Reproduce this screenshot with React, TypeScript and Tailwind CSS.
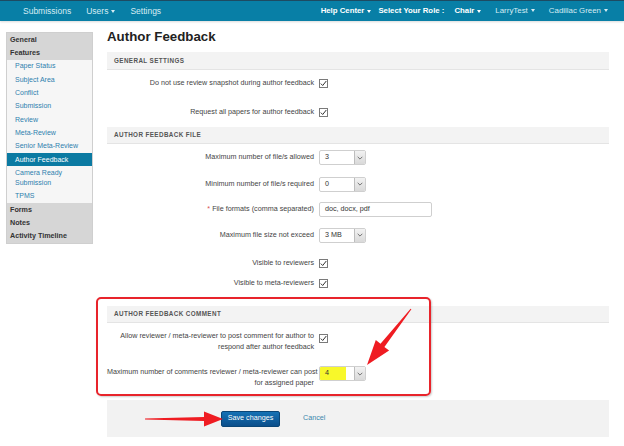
import type { ReactNode } from "react";

const Caret = ({ light }: { light?: boolean }) => (
  <span
    className={`ml-[3px] inline-block h-0 w-0 border-x-[2.5px] border-t-[3px] border-x-transparent align-middle ${
      light ? "border-t-[#d7ecf4]" : "border-t-white"
    }`}
  />
);

const Check = () => (
  <span className="flex h-[9px] w-[9px] items-center justify-center border border-[#7a7a7a] bg-white">
    <svg width="7" height="7" viewBox="0 0 7 7">
      <path d="M0.8 3.6 L2.7 5.5 L6.3 1" fill="none" stroke="#333" strokeWidth="1" />
    </svg>
  </span>
);

const Select = ({ value, highlight }: { value: string; highlight?: boolean }) => (
  <div className="flex h-[15px] w-[47px] overflow-hidden rounded-[2px] border border-[#cfcfcf] bg-white">
    <div className="flex flex-1 items-center">
      <span
        className={`flex h-full items-center pl-[5px] text-[7.2px] text-[#333] ${
          highlight ? "w-[26px] bg-[#f8f82a]" : ""
        }`}
      >
        {value}
      </span>
    </div>
    <div className="flex w-[11px] items-center justify-center border-l border-[#bdbdbd] bg-gradient-to-b from-[#f2f2f2] to-[#d9d9d9]">
      <svg width="6" height="4" viewBox="0 0 6 4">
        <path d="M0.7 0.8 L3 3.1 L5.3 0.8" fill="none" stroke="#666" strokeWidth="0.9" />
      </svg>
    </div>
  </div>
);

const SectionHead = ({ children, h }: { children: ReactNode; h: string }) => (
  <div
    className={`${h} flex items-center border-b border-[#e4e4e4] bg-[#f3f3f3] pl-[7px] text-[6.3px] font-bold tracking-[0.4px] text-[#555]`}
  >
    {children}
  </div>
);

const Row = ({ label, h, children }: { label: ReactNode; h: string; children: ReactNode }) => (
  <div className={`${h} flex items-center`}>
    <div className="w-[207px] text-right text-[7.2px] text-[#444]">{label}</div>
    <div className="ml-[5px]">{children}</div>
  </div>
);

function arrow(tx: number, ty: number, px: number, py: number, hl: number, hw: number, sw: number, tw: number) {
  const dx = px - tx;
  const dy = py - ty;
  const L = Math.hypot(dx, dy);
  const ux = dx / L;
  const uy = dy / L;
  const nx = -uy;
  const ny = ux;
  const bx = px - ux * hl;
  const by = py - uy * hl;
  const pts = [
    [tx + (nx * tw) / 2, ty + (ny * tw) / 2],
    [bx + (nx * sw) / 2, by + (ny * sw) / 2],
    [bx + (nx * hw) / 2, by + (ny * hw) / 2],
    [px, py],
    [bx - (nx * hw) / 2, by - (ny * hw) / 2],
    [bx - (nx * sw) / 2, by - (ny * sw) / 2],
    [tx - (nx * tw) / 2, ty - (ny * tw) / 2],
  ];
  return pts.map((p) => p.map((v) => v.toFixed(1)).join(",")).join(" ");
}

const sideHead = "flex h-[13.33px] items-center bg-[#d6d6d6] pl-[3px] text-[7.2px] font-bold text-[#333]";
const sideItem = "flex h-[13.33px] items-center bg-[#f6f6f6] pl-[8px] text-[7px] text-[#2f7fae]";

export default function App() {
  return (
    <div className="relative h-[446px] w-[624px] overflow-hidden bg-white font-['Liberation_Sans',Arial,sans-serif]">
      {/* top nav */}
      <div className="flex h-[21px] items-center border-t-[1.5px] border-[#1d4b62] bg-[#087fa6] text-[8.5px] shadow-[0_1px_2px_rgba(0,0,0,0.15)]">
        <div className="ml-[23px] flex gap-[15px] text-[#d7ecf4]">
          <span>Submissions</span>
          <span>
            Users
            <Caret light />
          </span>
          <span>Settings</span>
        </div>
        <div className="ml-auto mr-[16px] flex items-center text-white">
          <span className="text-[7.8px] font-bold">
            Help Center
            <Caret />
          </span>
          <span className="ml-[7px] text-[7.8px] font-bold">Select Your Role :</span>
          <span className="ml-[10px] text-[7.8px] font-bold">
            Chair
            <Caret />
          </span>
          <span className="ml-[14px] text-[7.9px] text-[#d7ecf4]">
            LarryTest
            <Caret light />
          </span>
          <span className="ml-[14px] text-[7.9px] text-[#d7ecf4]">
            Cadillac Green
            <Caret light />
          </span>
        </div>
      </div>

      <div className="flex">
        {/* sidebar */}
        <div className="ml-[6px] mt-[11px] w-[87px] self-start border border-[#cfcfcf] leading-[10px]">
          <div className={sideHead}>General</div>
          <div className={sideHead}>Features</div>
          <div className={sideItem}>Paper Status</div>
          <div className={sideItem}>Subject Area</div>
          <div className={sideItem}>Conflict</div>
          <div className={sideItem}>Submission</div>
          <div className={sideItem}>Review</div>
          <div className={sideItem}>Meta-Review</div>
          <div className={sideItem}>Senior Meta-Review</div>
          <div className="flex h-[13.33px] items-center bg-[#0b7aa2] pl-[8px] text-[7px] text-white">Author Feedback</div>
          <div className="bg-[#f6f6f6] py-[1.67px] pl-[8px] text-[7px] leading-[10px] text-[#2f7fae]">
            Camera Ready
            <br />
            Submission
          </div>
          <div className={sideItem}>TPMS</div>
          <div className={sideHead}>Forms</div>
          <div className={sideHead}>Notes</div>
          <div className={sideHead}>Activity Timeline</div>
        </div>

        {/* main */}
        <div className="ml-[14px] w-[502px]">
          <div className="mb-[6px] mt-[7px] h-[18px] text-[13.3px] font-bold leading-[18px] text-[#222]">Author Feedback</div>

          <SectionHead h="h-[18px]">GENERAL SETTINGS</SectionHead>
          <Row h="h-[27px]" label="Do not use review snapshot during author feedback">
            <Check />
          </Row>
          <Row h="h-[30px]" label="Request all papers for author feedback">
            <Check />
          </Row>

          <SectionHead h="h-[17px]">AUTHOR FEEDBACK FILE</SectionHead>
          <Row h="h-[27px]" label="Maximum number of file/s allowed">
            <Select value="3" />
          </Row>
          <Row h="h-[26px]" label="Minimum number of file/s required">
            <Select value="0" />
          </Row>
          <Row
            h="h-[25px]"
            label={
              <>
                <span className="text-[#d9534f]">*</span> File formats (comma separated)
              </>
            }
          >
            <div className="flex h-[15px] w-[113px] items-center rounded-[2px] border border-[#cfcfcf] bg-white pl-[5px] text-[7.2px] text-[#333]">
              doc, docx, pdf
            </div>
          </Row>
          <Row h="h-[26px]" label="Maximum file size not exceed">
            <Select value="3 MB" />
          </Row>
          <div className="h-[5px]" />
          <Row h="h-[20px]" label="Visible to reviewers">
            <Check />
          </Row>
          <Row h="h-[20px]" label="Visible to meta-reviewers">
            <Check />
          </Row>
          <div className="h-[13px]" />

          <SectionHead h="h-[17px]">AUTHOR FEEDBACK COMMENT</SectionHead>
          <div className="flex items-start pt-[8px]">
            <div className="w-[207px] whitespace-nowrap text-right text-[7.2px] leading-[10.6px] text-[#444]">
              Allow reviewer / meta-reviewer to post comment for author to
              <br />
              respond after author feedback
            </div>
            <div className="ml-[5px] mt-[3px]">
              <Check />
            </div>
          </div>
          <div className="flex items-start pt-[15px]">
            <div className="w-[207px] whitespace-nowrap text-right text-[7.2px] leading-[10.6px] text-[#444]">
              Maximum number of comments reviewer / meta-reviewer can post
              <br />
              for assigned paper
            </div>
            <div className="ml-[5px] -mt-[1px]">
              <Select value="4" highlight />
            </div>
          </div>

          <div className="mt-[12px] flex h-[37px] items-center bg-[#f2f2f2] pl-[114px]">
            <button className="h-[16px] w-[59px] rounded-[2px] border border-[#0a4677] bg-gradient-to-b from-[#1672b5] to-[#0b4f8b] text-[7.2px] text-white">
              Save changes
            </button>
            <span className="ml-[23px] text-[7.2px] text-[#3a87ad]">Cancel</span>
          </div>
        </div>
      </div>

      {/* annotations */}
      <div className="pointer-events-none absolute left-[96px] top-[297px] h-[99px] w-[335px] rounded-[5px] border-2 border-[#e8242b] shadow-[1px_1px_2px_rgba(0,0,0,0.2)]" />
      <svg className="pointer-events-none absolute left-0 top-0" width="624" height="446">
        <polygon points={arrow(411, 309, 367, 365, 25, 17, 5, 1)} fill="#ef1c22" />
        <polygon points={arrow(145, 419, 223, 419, 19, 15, 4, 1)} fill="#ef1c22" />
      </svg>
    </div>
  );
}
